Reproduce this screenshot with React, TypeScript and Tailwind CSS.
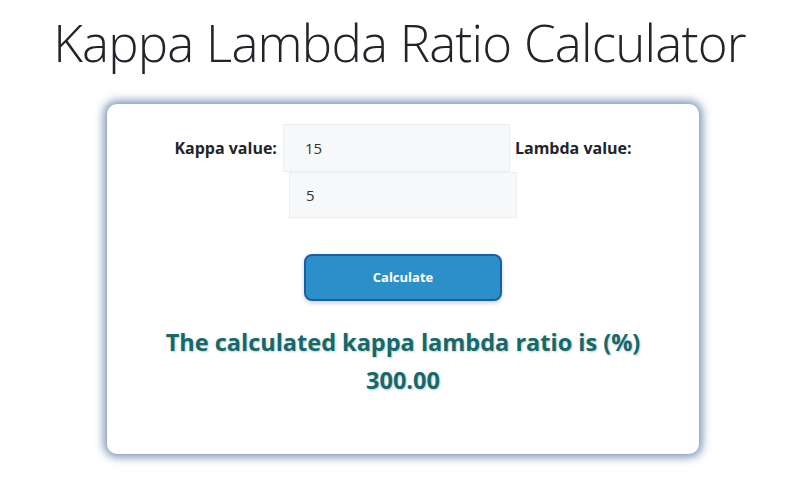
import React from "react";

export default function App() {
  return (
    <div className="w-[799px] h-[486px] bg-white overflow-hidden" style={{ fontFamily: '"Open Sans", "Noto Sans", sans-serif' }}>
      <h1 className="text-center text-[51px] font-light text-[#212529] leading-[60px] pt-[12px] tracking-[-0.8px]">
        Kappa Lambda Ratio Calculator
      </h1>
      <div className="ml-[107px] mt-[32px] w-[592px] h-[350px] bg-white rounded-[10px] shadow-[0_0_10px_3px_rgba(70,110,155,0.75)] pt-[20px]">
        <div className="flex flex-wrap justify-center items-center">
          <label className="text-[16px] font-bold text-[#212529] mr-[6px]">Kappa value:</label>
          <input
            defaultValue="15"
            className="w-[227px] h-[48px] bg-[#f7f8fa] border border-[#eceef1] pl-[21px] text-[15px] text-[#333] outline-none"
          />
          <label className="text-[16px] font-bold text-[#212529] ml-[5px]">Lambda value:</label>
          <input
            defaultValue="5"
            className="w-[228px] h-[46px] bg-[#f7f8fa] border border-[#eceef1] pl-[16px] text-[15px] text-[#333] outline-none"
          />
        </div>
        <div className="flex justify-center mt-[36px]">
          <button className="w-[198px] h-[47px] bg-[#2b8fca] border-2 border-[#1a5ea6] rounded-[8px] text-white text-[13px] font-bold shadow-[0_2px_4px_rgba(0,0,0,0.2)]">
            Calculate
          </button>
        </div>
        <div className="mt-[22px] text-center text-[23.5px] font-bold text-[#16686a] leading-[38px] [text-shadow:1px_1px_2px_rgba(40,120,130,0.35)]">
          <div>The calculated kappa lambda ratio is (%)</div>
          <div>300.00</div>
        </div>
      </div>
    </div>
  );
}
